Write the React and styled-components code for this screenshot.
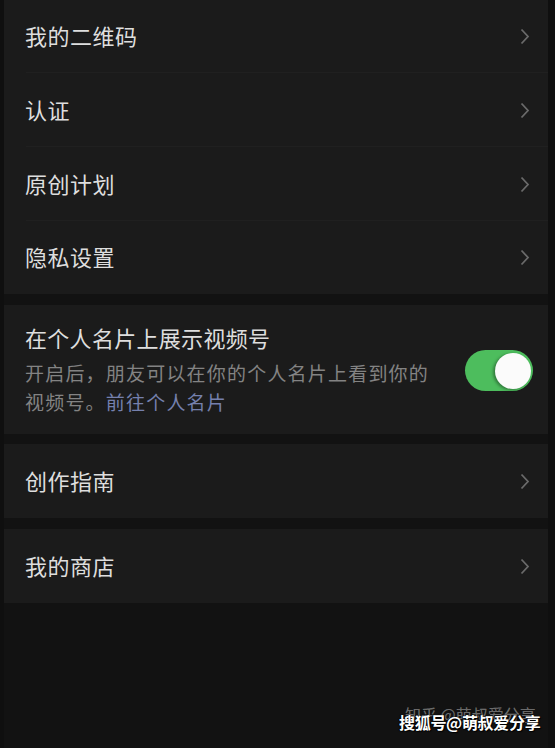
import styled, { createGlobalStyle } from "styled-components";

const Global = createGlobalStyle`
  html, body {
    margin: 0;
    padding: 0;
    background: #0f0f0f;
  }
  body {
    font-family: "Noto Sans CJK SC", "Noto Sans", sans-serif;
  }
`;

const Screen = styled.div`
  position: relative;
  width: 555px;
  height: 748px;
  overflow: hidden;
  background: #0f0f0f;
  padding: 0 7px 0 4px;
  box-sizing: border-box;
`;

const Page = styled.div`
  height: 100%;
  background: #121212;
  display: flex;
  flex-direction: column;
`;

const Group = styled.section`
  background: #1b1b1b;
  margin-bottom: ${(p) => p.$gap || 0}px;
`;

const Row = styled.div`
  height: ${(p) => p.$h || 73}px;
  display: flex;
  align-items: center;
  justify-content: space-between;
  padding: 0 18px 0 21px;
  position: relative;
  &:not(:last-child)::after {
    content: "";
    position: absolute;
    left: 22px;
    right: 0;
    bottom: 0;
    height: 1px;
    background: #202020;
  }
`;

const Label = styled.span`
  font-size: 22px;
  line-height: 1;
  color: #dedede;
  letter-spacing: 0.5px;
  margin-top: -3px;
`;

const SwitchBlock = styled.div`
  height: 129px;
  display: flex;
  align-items: center;
  justify-content: space-between;
  padding: 0 15px 0 21px;
`;

const TextCol = styled.div`
  display: flex;
  flex-direction: column;
  width: 420px;
`;

const Title = styled.div`
  font-size: 22px;
  color: #dedede;
  line-height: 30px;
  margin-bottom: 6px;
  margin-top: -2px;
  letter-spacing: 0.3px;
`;

const Desc = styled.div`
  font-size: 19px;
  color: #838383;
  line-height: 29px;
  letter-spacing: 1.2px;
`;

const Link = styled.span`
  color: #7580ad;
`;

const Toggle = styled.div`
  width: 68px;
  height: 41px;
  border-radius: 21px;
  background: #4dbd5d;
  display: flex;
  align-items: center;
  justify-content: flex-end;
  padding: 2px;
  box-sizing: border-box;
  margin-top: 2px;
`;

const Knob = styled.div`
  width: 36px;
  height: 36px;
  border-radius: 50%;
  background: #fbfbfb;
  box-shadow: -2px 1px 3px rgba(0, 0, 0, 0.35);
`;

const Watermark = styled.div`
  position: absolute;
  right: 14px;
  bottom: 12px;
  width: 142px;
  height: 26px;
`;

const WmBack = styled.span`
  position: absolute;
  left: 6px;
  top: -6px;
  font-size: 16px;
  line-height: 20px;
  color: rgba(255, 255, 255, 0.4);
  white-space: nowrap;
`;

const WmFront = styled.span`
  position: absolute;
  left: 0;
  top: 2px;
  font-size: 16px;
  line-height: 20px;
  font-weight: 700;
  color: #ffffff;
  white-space: nowrap;
  letter-spacing: -0.3px;
  text-shadow: 1px 1px 1px #000, -1px 0 1px #000;
`;

function Chevron() {
  return (
    <svg width="10" height="17" viewBox="0 0 10 17">
      <path
        d="M1.5 1.5 L8 8.5 L1.5 15.5"
        fill="none"
        stroke="#6a6a6a"
        strokeWidth="1.8"
      />
    </svg>
  );
}

function Item({ label, h }) {
  return (
    <Row $h={h}>
      <Label>{label}</Label>
      <Chevron />
    </Row>
  );
}

export default function App() {
  return (
    <>
      <Global />
      <Screen>
        <Page>
          <Group $gap={11}>
            <Item label="我的二维码" h={73} />
            <Item label="认证" h={74} />
            <Item label="原创计划" h={74} />
            <Item label="隐私设置" h={73} />
          </Group>
          <Group $gap={10}>
            <SwitchBlock>
              <TextCol>
                <Title>在个人名片上展示视频号</Title>
                <Desc>
                  开启后，朋友可以在你的个人名片上看到你的
                  <br />
                  视频号。<Link>前往个人名片</Link>
                </Desc>
              </TextCol>
              <Toggle>
                <Knob />
              </Toggle>
            </SwitchBlock>
          </Group>
          <Group $gap={11}>
            <Item label="创作指南" h={74} />
          </Group>
          <Group>
            <Item label="我的商店" h={74} />
          </Group>
        </Page>
        <Watermark>
          <WmBack>知乎 @萌叔爱分享</WmBack>
          <WmFront>搜狐号@萌叔爱分享</WmFront>
        </Watermark>
      </Screen>
    </>
  );
}
